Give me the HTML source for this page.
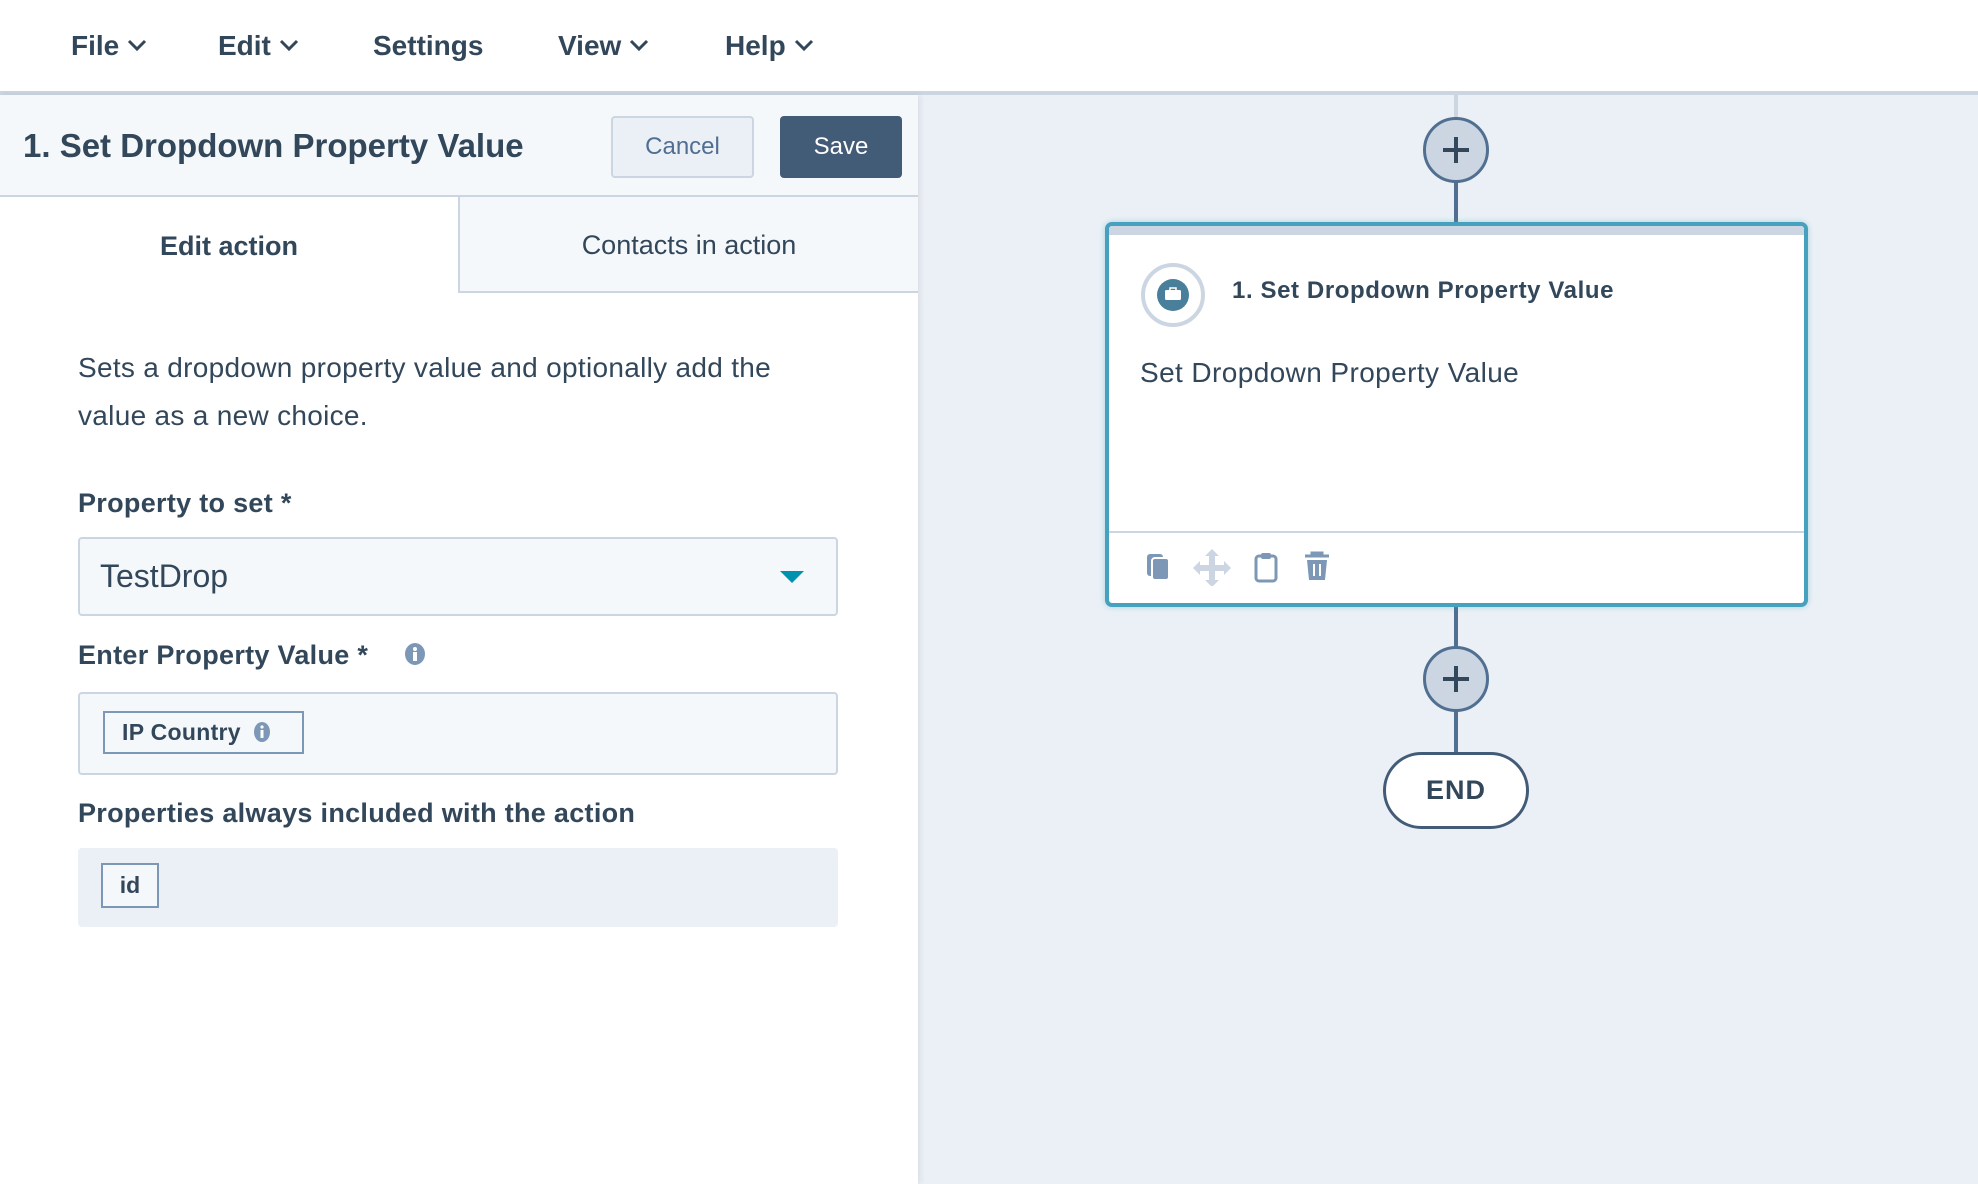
<!DOCTYPE html>
<html><head><meta charset="utf-8"><style>
*{box-sizing:border-box;margin:0;padding:0}
body{width:1978px;height:1184px;overflow:hidden;font-family:"Liberation Sans",sans-serif;color:#33475b;background:#eaf0f6;position:relative}
.a{position:absolute}
.menu{left:0;top:0;width:1978px;height:95px;background:#fff;border-bottom:4px solid #cbd6e2}
.mi{position:absolute;top:30px;font-size:28px;font-weight:bold;color:#33475b}
.mi svg{margin-left:8px;vertical-align:4px}
.left{left:0;top:95px;width:918px;height:1089px;background:#fff;box-shadow:2px 0 6px rgba(0,0,0,.08)}
.hdr{left:0;top:0;width:918px;height:102px;background:#f5f8fa;border-bottom:2px solid #cbd6e2}
.lbl{position:absolute;left:78px;font-size:27px;font-weight:bold;letter-spacing:.3px}
</style></head><body>
<div class="a menu">
<div class="mi" style="left:71px">File<svg width="20" height="12"><path d="M2 2l8 8 8-8" stroke="#33475b" stroke-width="3" fill="none"/></svg></div>
<div class="mi" style="left:218px">Edit<svg width="20" height="12"><path d="M2 2l8 8 8-8" stroke="#33475b" stroke-width="3" fill="none"/></svg></div>
<div class="mi" style="left:373px">Settings</div>
<div class="mi" style="left:558px">View<svg width="20" height="12"><path d="M2 2l8 8 8-8" stroke="#33475b" stroke-width="3" fill="none"/></svg></div>
<div class="mi" style="left:725px">Help<svg width="20" height="12"><path d="M2 2l8 8 8-8" stroke="#33475b" stroke-width="3" fill="none"/></svg></div>
</div>
<div class="a left">
<div class="a hdr">
<div class="a" style="left:23px;top:32px;font-size:33px;font-weight:bold">1. Set Dropdown Property Value</div>
<div class="a" style="left:611px;top:21px;width:143px;height:62px;background:#eaf0f6;border:2px solid #cbd6e2;border-radius:4px;font-size:24px;color:#506e91;text-align:center;line-height:58px">Cancel</div>
<div class="a" style="left:780px;top:21px;width:122px;height:62px;background:#425b76;border-radius:4px;font-size:24px;color:#fff;text-align:center;line-height:62px">Save</div>
</div>
<div class="a" style="left:0;top:102px;width:458px;height:96px;text-align:center;font-size:27px;font-weight:bold;line-height:98px">Edit action</div>
<div class="a" style="left:458px;top:102px;width:460px;height:96px;background:#f5f8fa;border-left:2px solid #cbd6e2;border-bottom:2px solid #cbd6e2;text-align:center;font-size:27px;line-height:96px">Contacts in action</div>
<div class="a" style="left:78px;top:249px;width:745px;font-size:28px;line-height:48px;letter-spacing:.3px">Sets a dropdown property value and optionally add the value as a new choice.</div>
<div class="lbl" style="top:393px">Property to set *</div>
<div class="a" style="left:78px;top:442px;width:760px;height:79px;background:#f5f8fa;border:2px solid #cbd6e2;border-radius:4px;font-size:32px;padding-left:20px;line-height:75px">TestDrop
<svg class="a" style="right:32px;top:32px" width="24" height="12"><path d="M0 0h24L12 12z" fill="#0091ae"/></svg></div>
<div class="lbl" style="top:545px">Enter Property Value *</div>
<svg class="a" style="left:404px;top:547px" width="22" height="24"><ellipse cx="11" cy="12" rx="10" ry="11" fill="#7c98b6"/><rect x="9" y="10" width="4" height="9" fill="#fff"/><circle cx="11" cy="7" r="2" fill="#fff"/></svg>
<div class="a" style="left:78px;top:597px;width:760px;height:83px;background:#f5f8fa;border:2px solid #cbd6e2;border-radius:4px"></div>
<div class="a" style="left:103px;top:616px;width:201px;height:43px;border:2px solid #7c98b6;background:#f5f8fa;font-size:23px;font-weight:bold;line-height:39px;padding-left:17px;letter-spacing:.3px">IP Country
<svg style="vertical-align:-3px;margin-left:6px" width="16" height="22"><ellipse cx="8" cy="11" rx="8" ry="10" fill="#7c98b6"/><rect x="6.5" y="9" width="3" height="8" fill="#fff"/><circle cx="8" cy="6" r="1.6" fill="#fff"/></svg></div>
<div class="lbl" style="top:703px">Properties always included with the action</div>
<div class="a" style="left:78px;top:753px;width:760px;height:79px;background:#eaf0f6;border-radius:4px"></div>
<div class="a" style="left:101px;top:768px;width:58px;height:45px;border:2px solid #7c98b6;background:#f5f8fa;font-size:23px;font-weight:bold;text-align:center;line-height:41px">id</div>
</div>
<div class="a" style="left:1454px;top:95px;width:4px;height:660px;background:#516f90"></div>
<div class="a" style="left:1454px;top:95px;width:4px;height:22px;background:#cbd6e2"></div>
<div class="a" style="left:1423px;top:117px;width:66px;height:66px;border-radius:50%;background:#cbd6e2;border:3px solid #516f90"></div>
<div class="a" style="left:1443px;top:148px;width:26px;height:4px;background:#33475b"></div><div class="a" style="left:1454px;top:137px;width:4px;height:26px;background:#33475b"></div>
<div class="a" style="left:1423px;top:646px;width:66px;height:66px;border-radius:50%;background:#cbd6e2;border:3px solid #516f90"></div>
<div class="a" style="left:1443px;top:677px;width:26px;height:4px;background:#33475b"></div><div class="a" style="left:1454px;top:666px;width:4px;height:26px;background:#33475b"></div>
<div class="a" style="left:1383px;top:752px;width:146px;height:77px;border-radius:39px;background:#fff;border:3px solid #425b76;text-align:center;font-size:27px;font-weight:bold;line-height:71px;letter-spacing:1px">END</div>
<div class="a" style="left:1105px;top:222px;width:703px;height:385px;background:#fff;border:4px solid #45a1be;border-radius:7px;overflow:hidden;box-shadow:0 0 6px rgba(69,161,190,.4)">
<div class="a" style="left:0;top:0;width:100%;height:9px;background:#cbd6e2"></div>
<div class="a" style="left:32px;top:37px;width:64px;height:64px;border-radius:50%;border:4px solid #cbd6e2"></div>
<div class="a" style="left:48px;top:53px;width:32px;height:32px;border-radius:50%;background:#4a7f9c"></div>
<svg class="a" style="left:54px;top:60px" width="20" height="16"><rect x="2" y="4" width="16" height="10" rx="1.5" fill="#fff"/><path d="M7 4V2h6v2" stroke="#fff" stroke-width="1.5" fill="none"/></svg>
<div class="a" style="left:123px;top:51px;font-size:24px;font-weight:bold;letter-spacing:.6px">1. Set Dropdown Property Value</div>
<div class="a" style="left:31px;top:131px;font-size:28px;letter-spacing:.4px">Set Dropdown Property Value</div>
<div class="a" style="left:0;top:305px;width:100%;height:2px;background:#cbd6e2"></div>
<svg class="a" style="left:36px;top:322px" width="190" height="38">
<rect x="2" y="6" width="16" height="22" rx="3" fill="#7c98b6"/><rect x="7" y="10" width="17" height="22" rx="3" fill="#7c98b6" stroke="#fff" stroke-width="2"/>
<g fill="#cbd6e2"><rect x="64" y="6" width="6" height="28"/><rect x="53" y="17" width="28" height="6"/><path d="M67 1l7 7h-14zM67 39l7-7h-14zM48 20l7-7v14zM86 20l-7-7v14z"/></g>
<rect x="111" y="8" width="20" height="25" rx="3" fill="none" stroke="#7c98b6" stroke-width="3"/><rect x="116" y="5" width="10" height="6" rx="2" fill="#7c98b6"/>
<path d="M160 8h24M167 8V5h10v3" stroke="#7c98b6" stroke-width="3" fill="none"/><path d="M162 12h20l-2 20h-16z" fill="#7c98b6"/><path d="M169 16v12M175 16v12" stroke="#fff" stroke-width="2"/>
</svg>
</div>
</body></html>
